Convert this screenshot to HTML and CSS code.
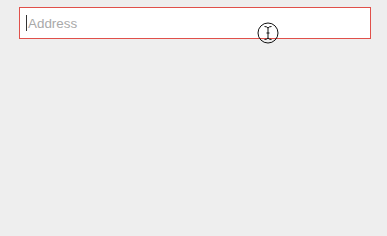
FILE: index.html
```html
<!DOCTYPE html>
<html>
<head>
<meta charset="utf-8">
<link rel="stylesheet" href="styles.css">
</head>
<body>
<div class="page">
  <div class="field">
    <span class="caret"></span><span class="placeholder">Address</span>
  </div>
</div>
<svg class="cursor" width="24" height="24" viewBox="0 0 24 24">
  <circle cx="12" cy="12" r="10" fill="none" stroke="#111" stroke-width="1"/>
  <path d="M8.5 5.5 Q11 5.5 12 7 Q13 5.5 15.5 5.5 M12 7 V17 M8.5 18.5 Q11 18.5 12 17 Q13 18.5 15.5 18.5 M10.5 12 H13.5" fill="none" stroke="#111" stroke-width="1"/>
</svg>
</body>
</html>
```
FILE: styles.css
```css
html, body {
  margin: 0;
  padding: 0;
  background: #eeeeee;
}
body {
  width: 387px;
  height: 236px;
  overflow: hidden;
  position: relative;
  font-family: "Liberation Sans", Arial, sans-serif;
}
.page {
  padding: 7px 16px 0 19px;
}
.field {
  box-sizing: border-box;
  width: 352px;
  height: 32px;
  border: 1px solid #e0504a;
  background: #ffffff;
  display: flex;
  align-items: center;
  padding-left: 6px;
}
.caret {
  display: inline-block;
  width: 1px;
  height: 16px;
  background: #333;
  margin-right: 1px;
}
.placeholder {
  font-size: 13.4px;
  color: #a9a9a9;
}
.cursor {
  position: absolute;
  left: 256px;
  top: 21px;
}
```
